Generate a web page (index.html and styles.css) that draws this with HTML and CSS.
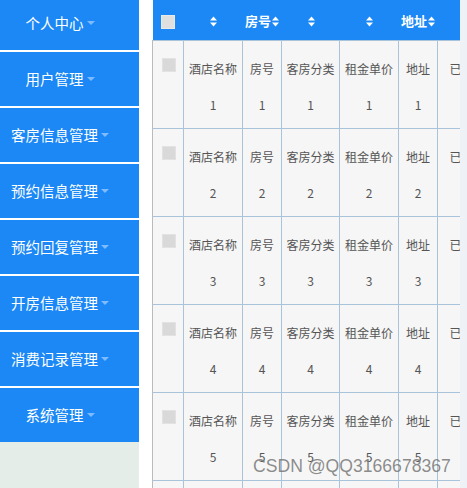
FILE: index.html
```html
<!DOCTYPE html>
<html lang="zh-CN">
<head>
<meta charset="utf-8">
<title>酒店管理</title>
<link rel="stylesheet" href="styles.css">
</head>
<body>
<div class="page">
  <aside class="sidebar">
    <ul class="menu">
      <li class="menu-item">个人中心<span class="caret"></span></li>
      <li class="menu-item">用户管理<span class="caret"></span></li>
      <li class="menu-item">客房信息管理<span class="caret"></span></li>
      <li class="menu-item">预约信息管理<span class="caret"></span></li>
      <li class="menu-item">预约回复管理<span class="caret"></span></li>
      <li class="menu-item">开房信息管理<span class="caret"></span></li>
      <li class="menu-item">消费记录管理<span class="caret"></span></li>
      <li class="menu-item">系统管理<span class="caret"></span></li>
    </ul>
    <div class="sidebar-fill"></div>
  </aside>
  <main class="table-wrap">
    <table class="grid">
      <colgroup>
        <col class="c-check"><col class="c-name"><col class="c-no"><col class="c-type"><col class="c-price"><col class="c-addr"><col class="c-pay"><col class="c-op">
      </colgroup>
      <thead>
        <tr>
          <th><span class="box box-head"></span></th>
          <th><svg class="sort" viewBox="0 0 7 11"><path d="M0 4.5L3.5 0.5L7 4.5Z M0 6.5L7 6.5L3.5 10.5Z"/></svg></th>
          <th>房号<svg class="sort" viewBox="0 0 7 11"><path d="M0 4.5L3.5 0.5L7 4.5Z M0 6.5L7 6.5L3.5 10.5Z"/></svg></th>
          <th><svg class="sort" viewBox="0 0 7 11"><path d="M0 4.5L3.5 0.5L7 4.5Z M0 6.5L7 6.5L3.5 10.5Z"/></svg></th>
          <th><svg class="sort" viewBox="0 0 7 11"><path d="M0 4.5L3.5 0.5L7 4.5Z M0 6.5L7 6.5L3.5 10.5Z"/></svg></th>
          <th>地址<svg class="sort" viewBox="0 0 7 11"><path d="M0 4.5L3.5 0.5L7 4.5Z M0 6.5L7 6.5L3.5 10.5Z"/></svg></th>
          <th><svg class="sort" viewBox="0 0 7 11"><path d="M0 4.5L3.5 0.5L7 4.5Z M0 6.5L7 6.5L3.5 10.5Z"/></svg></th>
          <th></th>
        </tr>
      </thead>
      <tbody>
        <tr>
          <td class="check"><span class="box"></span></td>
          <td><div class="lbl">酒店名称</div><div class="val">1</div></td>
          <td><div class="lbl">房号</div><div class="val">1</div></td>
          <td><div class="lbl">客房分类</div><div class="val">1</div></td>
          <td><div class="lbl">租金单价</div><div class="val">1</div></td>
          <td><div class="lbl">地址</div><div class="val">1</div></td>
          <td><div class="lbl">已支付</div><div class="val">1</div></td>
          <td></td>
        </tr>
        <tr>
          <td class="check"><span class="box"></span></td>
          <td><div class="lbl">酒店名称</div><div class="val">2</div></td>
          <td><div class="lbl">房号</div><div class="val">2</div></td>
          <td><div class="lbl">客房分类</div><div class="val">2</div></td>
          <td><div class="lbl">租金单价</div><div class="val">2</div></td>
          <td><div class="lbl">地址</div><div class="val">2</div></td>
          <td><div class="lbl">已支付</div><div class="val">2</div></td>
          <td></td>
        </tr>
        <tr>
          <td class="check"><span class="box"></span></td>
          <td><div class="lbl">酒店名称</div><div class="val">3</div></td>
          <td><div class="lbl">房号</div><div class="val">3</div></td>
          <td><div class="lbl">客房分类</div><div class="val">3</div></td>
          <td><div class="lbl">租金单价</div><div class="val">3</div></td>
          <td><div class="lbl">地址</div><div class="val">3</div></td>
          <td><div class="lbl">已支付</div><div class="val">3</div></td>
          <td></td>
        </tr>
        <tr>
          <td class="check"><span class="box"></span></td>
          <td><div class="lbl">酒店名称</div><div class="val">4</div></td>
          <td><div class="lbl">房号</div><div class="val">4</div></td>
          <td><div class="lbl">客房分类</div><div class="val">4</div></td>
          <td><div class="lbl">租金单价</div><div class="val">4</div></td>
          <td><div class="lbl">地址</div><div class="val">4</div></td>
          <td><div class="lbl">已支付</div><div class="val">4</div></td>
          <td></td>
        </tr>
        <tr>
          <td class="check"><span class="box"></span></td>
          <td><div class="lbl">酒店名称</div><div class="val">5</div></td>
          <td><div class="lbl">房号</div><div class="val">5</div></td>
          <td><div class="lbl">客房分类</div><div class="val">5</div></td>
          <td><div class="lbl">租金单价</div><div class="val">5</div></td>
          <td><div class="lbl">地址</div><div class="val">5</div></td>
          <td><div class="lbl">已支付</div><div class="val">5</div></td>
          <td></td>
        </tr>
        <tr>
          <td class="check"><span class="box"></span></td>
          <td><div class="lbl">酒店名称</div><div class="val">6</div></td>
          <td><div class="lbl">房号</div><div class="val">6</div></td>
          <td><div class="lbl">客房分类</div><div class="val">6</div></td>
          <td><div class="lbl">租金单价</div><div class="val">6</div></td>
          <td><div class="lbl">地址</div><div class="val">6</div></td>
          <td><div class="lbl">已支付</div><div class="val">6</div></td>
          <td></td>
        </tr>
      </tbody>
    </table>
  </main>
  <div class="right-strip"></div>
  <div class="watermark">CSDN @QQ3166678367</div>
</div>
</body>
</html>
```

FILE: styles.css
```css
html, body {
  margin: 0;
  padding: 0;
  background: #ffffff;
  font-family: "Noto Sans CJK SC", "Noto Sans", sans-serif;
}

.page {
  position: relative;
  display: flex;
  width: 467px;
  height: 488px;
  overflow: hidden;
}

.sidebar {
  width: 139px;
  flex: none;
  display: flex;
  flex-direction: column;
  margin-top: -4px;
  margin-right: 13px;
}

.menu {
  list-style: none;
  margin: 0;
  padding: 0;
  display: flex;
  flex-direction: column;
  gap: 2px;
  background: #ffffff;
}

.menu-item {
  height: 54px;
  background: #1b88f6;
  color: #ffffff;
  font-size: 14.5px;
  line-height: 54px;
  text-align: center;
  padding-right: 19px;
  white-space: nowrap;
}

.caret {
  display: inline-block;
  width: 0;
  height: 0;
  margin-left: 3px;
  vertical-align: 4px;
  border-left: 4px solid transparent;
  border-right: 4px solid transparent;
  border-top: 4px solid rgba(170, 210, 255, 0.7);
}

.sidebar-fill {
  flex: 1;
  background: #e5ede9;
}

.table-wrap {
  width: 308px;
  flex: none;
  height: 488px;
  overflow: hidden;
}

.grid {
  table-layout: fixed;
  border-collapse: collapse;
  width: 405px;
}

.c-check { width: 31px; }
.c-name { width: 59px; }
.c-no { width: 39px; }
.c-type { width: 58px; }
.c-price { width: 59px; }
.c-addr { width: 39px; }
.c-pay { width: 60px; }
.c-op { width: 60px; }

.grid th {
  height: 40px;
  padding: 0;
  background: #1b88f6;
  color: #ffffff;
  font-size: 13px;
  font-weight: bold;
  text-align: center;
  white-space: nowrap;
  overflow: visible;
  border: none;
}

.sort {
  width: 7px;
  height: 11px;
  fill: #ffffff;
  vertical-align: -1px;
  margin-left: 1px;
}

.grid td {
  height: 88px;
  box-sizing: border-box;
  padding: 0;
  vertical-align: top;
  text-align: center;
  background: #f6f6f6;
  border: 1px solid #a8c3da;
  color: #555555;
  font-size: 12px;
  white-space: nowrap;
}

.grid td:first-child {
  border-left-color: #b8bcc0;
}

.lbl {
  margin-top: 20px;
  line-height: 16px;
}

.val {
  margin-top: 20px;
  line-height: 16px;
}

.box {
  display: inline-block;
  width: 14px;
  height: 14px;
  background: #d9d9d9;
  border: 1px solid #e2e2e2;
  box-sizing: border-box;
  vertical-align: middle;
}

.box-head {
  background: #e0e0e0;
  border-color: #eaeaea;
}

.check .box {
  margin-top: 17px;
  margin-left: 2px;
}

.right-strip {
  flex: 1;
  background: #eef2f6;
}

.watermark {
  position: absolute;
  left: 253px;
  top: 456px;
  font-family: "Liberation Sans", Arial, sans-serif;
  font-size: 17.6px;
  color: rgba(120, 120, 120, 0.85);
  white-space: nowrap;
}
```
